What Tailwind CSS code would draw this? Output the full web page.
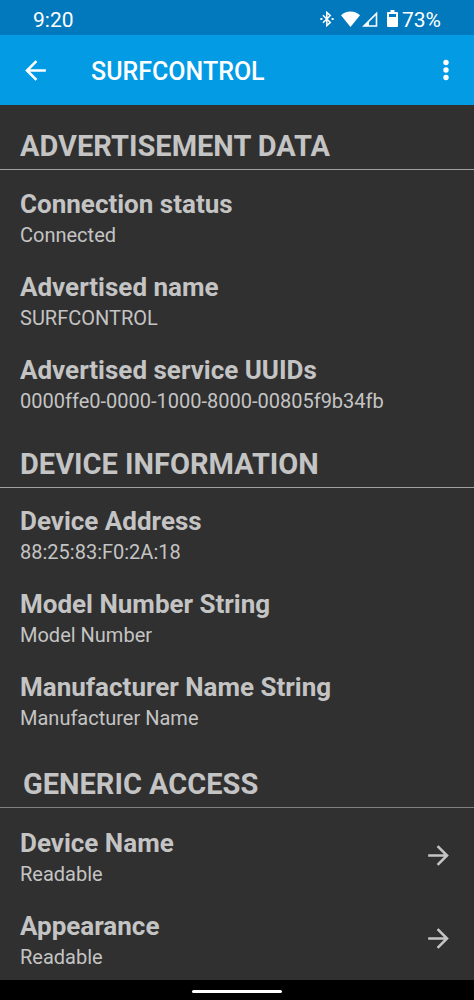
<!DOCTYPE html>
<html lang="en">
<head>
<meta charset="utf-8">
<meta name="viewport" content="width=device-width, initial-scale=1">
<title>SURFCONTROL</title>
<script src="https://cdn.jsdelivr.net/npm/@tailwindcss/browser@4"></script>
</head>
<body class="flex min-h-screen flex-col bg-[#303030] font-[Roboto,sans-serif] text-[#c4c4c4]">
<div class="flex h-[35px] items-center justify-between bg-[#0278bd] pt-1 pr-[33px] pl-[33px] text-[21px] leading-6 text-white">
  <span>9:20</span>
  <div class="flex items-center">
    <div class="flex items-center pb-[2px]">
      <svg class="mr-[7px] h-4 w-[14px]" viewBox="0 0 14 16" fill="none" stroke="currentColor" stroke-width="1.5" aria-hidden="true"><path d="M3 4.2 10.3 11.4 6.8 14.6V1.4L10.3 4.6 3 11.8"/><path d="M.4 8h2M11.6 8h2" stroke-width="2"/></svg>
      <svg class="mr-[2px] h-4 w-[19px]" viewBox="0 0 19 16" fill="currentColor" aria-hidden="true"><path d="M9.500 16 0 4.300C2.300 1.900 5.700.5 9.500.5S16.700 1.900 19 4.300Z"/></svg>
      <svg class="mr-[9px] h-4 w-4" viewBox="0 0 16 16" aria-hidden="true"><path d="M14.500 2.500V15H2Z" fill="none" stroke="currentColor" stroke-width="1.600"/><path d="M2 15 7 10V15Z" fill="currentColor"/></svg>
      <svg class="mr-[4px] h-[17px] w-[11px]" viewBox="0 0 11 17" aria-hidden="true"><path d="M3.500 0h4v2H10a1 1 0 0 1 1 1v13a1 1 0 0 1-1 1H1a1 1 0 0 1-1-1V3a1 1 0 0 1 1-1h2.500Z" fill="currentColor"/><path d="M2 4h7v3H2Z" fill="#0278bd"/></svg>
    </div>
    <span>73%</span>
  </div>
</div>
<header class="flex h-[70px] items-center bg-[#049be5] pr-[18px] pl-5 text-white">
  <button type="button" aria-label="Back" class="mr-10 flex size-[31px] items-center justify-center"><svg class="size-[31px]" viewBox="0 0 24 24" fill="currentColor"><path d="M20 11H7.830l5.590-5.590L12 4l-8 8 8 8 1.410-1.410L7.830 13H20v-2z"/></svg></button>
  <h1 class="flex-1 pt-1 text-[25px] leading-8 font-medium">SURFCONTROL</h1>
  <button type="button" aria-label="More options" class="flex h-8 w-5 items-center justify-center"><svg class="h-6 w-[6px]" viewBox="0 0 6 24" fill="currentColor"><circle cx="3" cy="4.500" r="2.700"/><circle cx="3" cy="12" r="2.700"/><circle cx="3" cy="19.500" r="2.700"/></svg></button>
</header>
<main class="flex-1 pb-2">
  <section>
    <h2 class="border-b border-[#a0a0a0] px-5 pt-[23px] pb-[5px] text-[29px] leading-9 font-bold">ADVERTISEMENT DATA</h2>
    <dl class="flex flex-col gap-[21px] px-5 pt-[18px]">
      <div><dt class="text-[26px] leading-8 font-bold">Connection status</dt><dd class="text-[20px] leading-[30px]">Connected</dd></div>
      <div><dt class="text-[26px] leading-8 font-bold">Advertised name</dt><dd class="text-[20px] leading-[30px]">SURFCONTROL</dd></div>
      <div><dt class="text-[26px] leading-8 font-bold">Advertised service UUIDs</dt><dd class="text-[20px] leading-[30px]">0000ffe0-0000-1000-8000-00805f9b34fb</dd></div>
    </dl>
  </section>
  <section>
    <h2 class="border-b border-[#a0a0a0] px-5 pt-[30px] pb-[5px] text-[29px] leading-9 font-bold">DEVICE INFORMATION</h2>
    <dl class="flex flex-col gap-[21px] px-5 pt-[17px]">
      <div><dt class="text-[26px] leading-8 font-bold">Device Address</dt><dd class="text-[20px] leading-[30px]">88:25:83:F0:2A:18</dd></div>
      <div><dt class="text-[26px] leading-8 font-bold">Model Number String</dt><dd class="text-[20px] leading-[30px]">Model Number</dd></div>
      <div><dt class="text-[26px] leading-8 font-bold">Manufacturer Name String</dt><dd class="text-[20px] leading-[30px]">Manufacturer Name</dd></div>
    </dl>
  </section>
  <section>
    <h2 class="border-b border-[#808080] pt-[33px] pr-5 pb-[5px] pl-[23px] text-[29px] leading-9 font-bold">GENERIC ACCESS</h2>
    <div class="flex flex-col gap-[21px] pt-[19px]">
      <button type="button" class="flex w-full items-center justify-between px-5 text-left">
        <span><span class="block text-[26px] leading-8 font-bold">Device Name</span><span class="block text-[20px] leading-[30px]">Readable</span></span>
        <svg class="mb-[6px] size-[31px]" viewBox="0 0 24 24" fill="currentColor" aria-hidden="true"><path d="m12 4-1.410 1.410L16.170 11H4v2h12.170l-5.580 5.590L12 20l8-8z"/></svg>
      </button>
      <button type="button" class="flex w-full items-center justify-between px-5 text-left">
        <span><span class="block text-[26px] leading-8 font-bold">Appearance</span><span class="block text-[20px] leading-[30px]">Readable</span></span>
        <svg class="mb-[6px] size-[31px]" viewBox="0 0 24 24" fill="currentColor" aria-hidden="true"><path d="m12 4-1.410 1.410L16.170 11H4v2h12.170l-5.580 5.590L12 20l8-8z"/></svg>
      </button>
    </div>
  </section>
</main>
<div class="flex h-5 items-center justify-center bg-black pt-[2px]"><div class="h-[3px] w-[90px] rounded-full bg-white"></div></div>
</body>
</html>
